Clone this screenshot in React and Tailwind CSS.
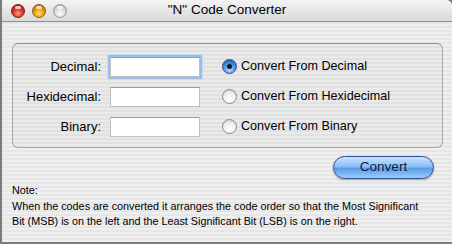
import { useState } from "react";

const font = { fontFamily: '"Liberation Sans", Arial, sans-serif' };

const TrafficLight = ({ color }) => {
  const styles = {
    red: "bg-[radial-gradient(circle_at_50%_70%,#ff9a8a_0%,#e0362a_45%,#8c1208_100%)] border-[#7a1a12]",
    amber: "bg-[radial-gradient(circle_at_50%_70%,#ffe08a_0%,#f0a000_45%,#9a5a00_100%)] border-[#8a5a10]",
    gray: "bg-[radial-gradient(circle_at_50%_70%,#ffffff_0%,#d8d8d8_50%,#a0a0a0_100%)] border-[#9a9a9a]",
  };
  return (
    <div className={`relative w-[14px] h-[14px] rounded-full border ${styles[color]}`}>
      <div className="absolute top-[1px] left-[3px] w-[6px] h-[3px] rounded-full bg-white/70" />
    </div>
  );
};

const Radio = ({ checked, label, onClick }) => (
  <button onClick={onClick} className="flex items-center gap-[4px] h-[20px] text-[12.6px] text-black">
    <span
      className={`relative w-[15px] h-[15px] rounded-full border flex items-center justify-center ${
        checked
          ? "border-[#2a4f8a] bg-[radial-gradient(circle_at_50%_75%,#b8dcff_0%,#4a8ee0_50%,#1c4fa0_100%)]"
          : "border-[#8a8a8a] bg-[radial-gradient(circle_at_50%_75%,#ffffff_0%,#eeeeee_55%,#c4c4c4_100%)]"
      }`}
    >
      {checked && <span className="w-[5px] h-[5px] rounded-full bg-[#101828]" />}
    </span>
    <span>{label}</span>
  </button>
);

const Field = ({ label, focused }) => (
  <div className="flex items-center h-[20px]">
    <span className="w-[97px] text-right text-[13px] text-black pr-[9px]">{label}</span>
    <input
      className={`w-[90px] h-[20px] bg-white outline-none border border-[#c0c0c0] border-t-[#9a9a9a] ${
        focused ? "shadow-[0_0_0_2px_#9cbfe6,0_0_0_3px_#c8dcf2]" : ""
      }`}
    />
  </div>
);

export default function App() {
  const [mode, setMode] = useState(0);
  const options = ["Convert From Decimal", "Convert From Hexidecimal", "Convert From Binary"];

  return (
    <div
      style={font}
      className="w-[452px] h-[244px] overflow-hidden bg-[#7c7c7c] pl-[2px] pb-[2px]"
    >
      <div className="h-full flex flex-col rounded-tr-[6px] overflow-hidden bg-[repeating-linear-gradient(to_bottom,#efefef_0px,#efefef_2px,#e6e6e6_2px,#e6e6e6_4px)]">
        {/* title bar */}
        <div className="relative h-[22px] flex items-center bg-[linear-gradient(to_bottom,#f4f4f4,#d9d9d9)] border-b border-[#8e8e8e]">
          <div className="flex gap-[7px] pl-[9px]">
            <TrafficLight color="red" />
            <TrafficLight color="amber" />
            <TrafficLight color="gray" />
          </div>
          <div className="absolute inset-0 flex items-center justify-center text-[13.5px] text-black">
            "N" Code Converter
          </div>
        </div>

        {/* group box */}
        <div className="mt-[21px] ml-[10px] mr-[9px] h-[105px] rounded-[6px] border border-[#a6a6a6] border-t-[#8e8e8e] bg-black/[0.02] flex items-center">
          <div className="flex flex-col gap-[10px] pt-[2px]">
            <Field label="Decimal:" focused />
            <Field label="Hexidecimal:" />
            <Field label="Binary:" />
          </div>
          <div className="flex flex-col gap-[10px] ml-[22px] pt-[2px]">
            {options.map((o, i) => (
              <Radio key={o} label={o} checked={mode === i} onClick={() => setMode(i)} />
            ))}
          </div>
        </div>

        {/* button */}
        <div className="flex justify-end pr-[18px] mt-[8px]">
          <button className="w-[101px] h-[23px] rounded-full border border-[#2f4f8e] text-[13.5px] text-[#0c1a40] bg-[linear-gradient(to_bottom,#c6e2ff_0%,#8cc0f4_45%,#5c9ce8_55%,#9ccdfc_100%)] shadow-[0_1px_2px_rgba(0,0,0,0.3)]">
            Convert
          </button>
        </div>

        {/* note */}
        <div className="w-[425px] pl-[10px] mt-[4px] text-[10.8px] leading-[15.5px] text-black">
          <p>Note:</p>
          <p>
            When the codes are converted it arranges the code order so that the Most Significant
            Bit (MSB) is on the left and the Least Significant Bit (LSB) is on the right.
          </p>
        </div>
      </div>
    </div>
  );
}
